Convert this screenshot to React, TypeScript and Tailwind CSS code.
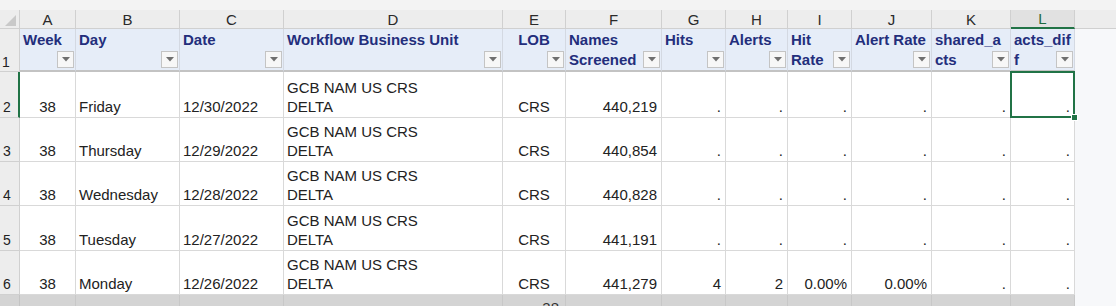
import React from "react";

interface HeaderDef {
  letter: string;
  lines: string[];
  center?: boolean;
}

const headers: HeaderDef[] = [
  { letter: "A", lines: ["Week"] },
  { letter: "B", lines: ["Day"] },
  { letter: "C", lines: ["Date"] },
  { letter: "D", lines: ["Workflow Business Unit"] },
  { letter: "E", lines: ["LOB"], center: true },
  { letter: "F", lines: ["Names", "Screened"] },
  { letter: "G", lines: ["Hits"] },
  { letter: "H", lines: ["Alerts"] },
  { letter: "I", lines: ["Hit", "Rate"] },
  { letter: "J", lines: ["Alert Rate"] },
  { letter: "K", lines: ["shared_a", "cts"] },
  { letter: "L", lines: ["acts_dif", "f"] },
];

const rows = [
  { n: 2, day: "Friday", date: "12/30/2022", names: "440,219", rest: [".", ".", ".", ".", ".", "."] },
  { n: 3, day: "Thursday", date: "12/29/2022", names: "440,854", rest: [".", ".", ".", ".", ".", "."] },
  { n: 4, day: "Wednesday", date: "12/28/2022", names: "440,828", rest: [".", ".", ".", ".", ".", "."] },
  { n: 5, day: "Tuesday", date: "12/27/2022", names: "441,191", rest: [".", ".", ".", ".", ".", "."] },
  { n: 6, day: "Monday", date: "12/26/2022", names: "441,279", rest: ["4", "2", "0.00%", "0.00%", ".", "."] },
];

const grid =
  "grid grid-cols-[20px_56px_104px_104px_219px_63px_96px_64px_62px_64px_80px_79px_64px_1fr]";

const cell = "border-r border-b border-[#d9d9d9] bg-white";

function FilterButton() {
  return (
    <div className="absolute right-[1px] bottom-[2px] w-[17px] h-[17px] border border-[#c4c4c4] bg-[#f7f7f7] flex items-center justify-center">
      <svg width="8" height="5" viewBox="0 0 8 5">
        <path d="M0 0 L8 0 L4 4.5 Z" fill="#6f6f6f" />
      </svg>
    </div>
  );
}

function DataCell({
  children,
  align = "left",
  selected = false,
}: {
  children?: React.ReactNode;
  align?: "left" | "right" | "center";
  selected?: boolean;
}) {
  const alignCls =
    align === "right" ? "text-right pr-[4px]" : align === "center" ? "text-center" : "text-left pl-[3px]";
  return (
    <div
      className={`${cell} relative flex flex-col justify-end pb-[1px] ${alignCls} ${
        selected ? "overflow-visible z-10" : "overflow-hidden"
      }`}
    >
      <div className="leading-[19px]">{children}</div>
      {selected && (
        <>
          <div className="absolute -left-[1px] -top-[1px] -right-[1px] -bottom-[1px] border-2 border-[#217346]" />
          <div className="absolute -right-[4px] -bottom-[4px] w-[7px] h-[7px] bg-[#217346] border border-white" />
        </>
      )}
    </div>
  );
}

export default function App() {
  return (
    <div className="w-[1116px] h-[306px] overflow-hidden bg-[#f7f8fa] font-['Liberation_Sans',Arial,sans-serif] text-[15px] text-[#222]">
      <div className="h-[10px] bg-[#f3f3f3]" />
      <div className={`${grid} grid-rows-[19px_43px_46px_44px_44px_45px_44px_11px]`}>
        {/* column letters */}
        <div className="bg-[#ededed] border-r border-b border-[#d0d0d0] relative">
          <svg className="absolute right-[3px] bottom-[2px]" width="11" height="11" viewBox="0 0 11 11">
            <path d="M11 0 L11 11 L0 11 Z" fill="#c9c9c9" />
          </svg>
        </div>
        {headers.map((h) =>
          h.letter === "L" ? (
            <div
              key={h.letter}
              className="bg-[#e1e1e1] border-r border-[#d0d0d0] border-b-2 border-b-[#217346] text-center leading-[18px] text-[#1e6b3f] text-[15px]"
            >
              {h.letter}
            </div>
          ) : (
            <div
              key={h.letter}
              className="bg-[#ededed] border-r border-b border-[#d0d0d0] text-center leading-[19px] text-[15px] text-[#2a2a2a]"
            >
              {h.letter}
            </div>
          )
        )}
        <div className="bg-[#ededed] border-b border-[#d0d0d0]" />

        {/* row 1: table headers */}
        <div className="bg-[#ededed] border-r border-b border-[#d0d0d0] flex items-end pl-[2px] text-[14px] leading-[18px]">
          1
        </div>
        {headers.map((h) => (
          <div
            key={"h" + h.letter}
            className={`relative bg-[#e6edf8] border-r border-[#d4d9e2] border-b-2 border-b-[#c3c3c3] font-bold text-[#232e7c] leading-[20px] pt-[1px] ${
              h.center ? "text-center" : "pl-[3px]"
            } whitespace-nowrap`}
          >
            {h.lines.map((l) => (
              <div key={l}>{l}</div>
            ))}
            <FilterButton />
          </div>
        ))}
        <div className="bg-[#f7f8fa]" />

        {/* data rows */}
        {rows.map((r) => (
          <React.Fragment key={r.n}>
            <div
              className={`bg-[#ededed] border-b border-[#d0d0d0] flex items-end pl-[3px] pb-[1px] text-[14px] leading-[18px] ${
                r.n === 2 ? "border-r-2 border-r-[#217346]" : "border-r"
              }`}
            >
              {r.n}
            </div>
            <DataCell align="center">38</DataCell>
            <DataCell>{r.day}</DataCell>
            <DataCell>{r.date}</DataCell>
            <DataCell>
              <div>GCB NAM US CRS</div>
              <div>DELTA</div>
            </DataCell>
            <DataCell align="center">CRS</DataCell>
            <DataCell align="right">{r.names}</DataCell>
            {r.rest.map((v, i) => (
              <DataCell key={i} align="right" selected={r.n === 2 && i === 5}>
                {v}
              </DataCell>
            ))}
            <div className="bg-[#f7f8fa]" />
          </React.Fragment>
        ))}

        {/* partially visible next row */}
        <div className="bg-[#d4d4d4] border-r border-[#c4c4c4]" />
        {headers.map((h) => (
          <div
            key={"b" + h.letter}
            className="bg-[#d4d4d4] border-r border-[#c8c8c8] overflow-hidden relative"
          >
            {h.letter === "E" && (
              <span className="absolute right-[6px] top-[3px] text-[15px] leading-[19px] text-[#333]">38</span>
            )}
          </div>
        ))}
        <div className="bg-[#f7f8fa]" />
      </div>
    </div>
  );
}
